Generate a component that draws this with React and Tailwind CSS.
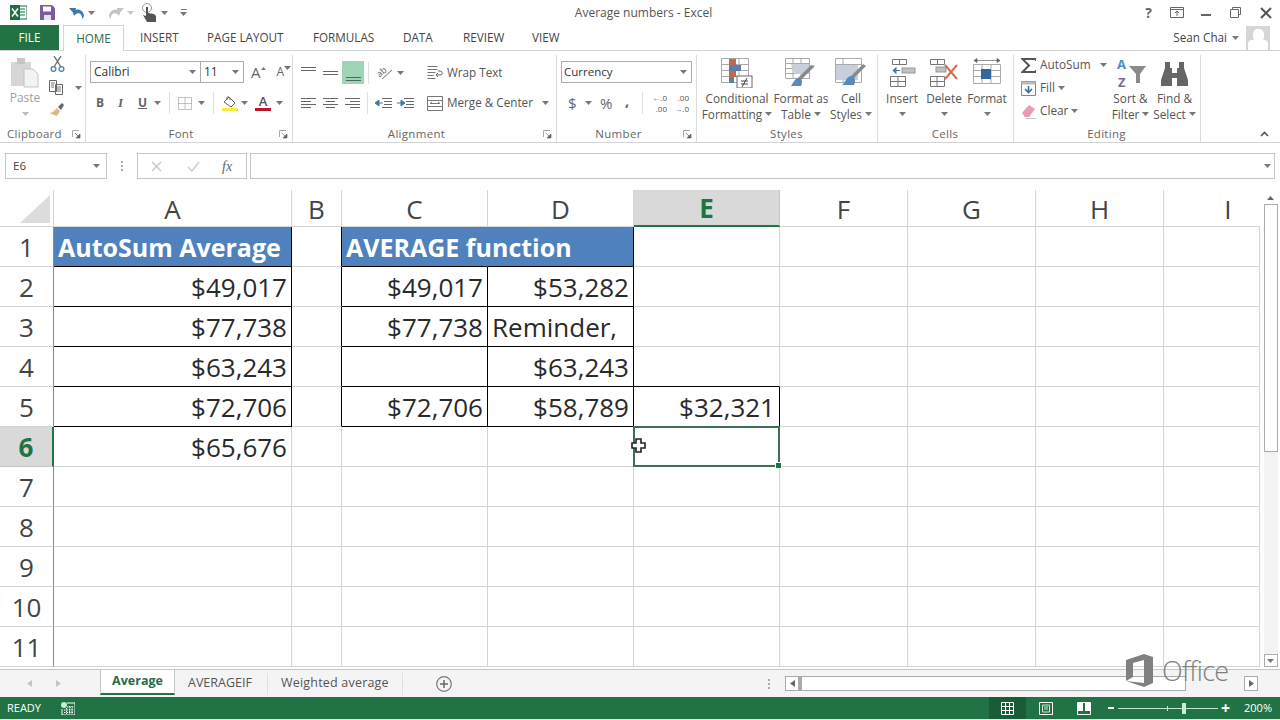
import React from 'react';

const ui = { fontFamily: '"Open Sans", "Noto Sans", sans-serif' };

const Caret = ({ className = '' }) => (
  <svg width="7" height="4" viewBox="0 0 7 4" className={className}><path d="M0 0h7L3.5 4z" fill="#777" /></svg>
);

const Launcher = () => (
  <svg width="9" height="9" viewBox="0 0 9 9"><path d="M.5 7V.5H7" fill="none" stroke="#aaa" /><path d="M3 3l4 4M8 4v4H4z" fill="#666" stroke="#666" strokeWidth=".7" /></svg>
);

const Lines = ({ rows, width = 15, height = 12, color = '#666' }) => (
  <svg width={width} height={height} viewBox={`0 0 ${width} ${height}`}>
    {rows.map((r, i) => <path key={i} d={`M${r[0]} ${r[2]}.5H${r[1]}`} stroke={color} />)}
  </svg>
);

const Group = ({ width, label, launcher, children }) => (
  <div className={`flex flex-col border-r border-[#dadada] ${width}`}>
    <div className="h-[71px] flex">{children}</div>
    <div className={`h-[16px] relative flex items-center justify-center text-[11.5px] text-[#666] tracking-[0.3px] ${launcher ? 'pr-[16px]' : 'pr-[1px]'}`}>
      {label}
      {launcher && <span className="absolute right-[4px] top-[4px] flex"><Launcher /></span>}
    </div>
  </div>
);

const Large = ({ width, icon, one, two, caret = true }) => (
  <div className={`flex flex-col items-center pt-[3px] ${width}`}>
    <div className="h-[30px] flex items-center justify-center">{icon}</div>
    <div className="mt-[2px] text-[11.8px] leading-[16px] text-[#555] text-center whitespace-nowrap">{one}</div>
    <div className="h-[16px] text-[11.8px] leading-[16px] text-[#555] flex items-center gap-[3px] whitespace-nowrap">
      {two}{caret && <Caret />}
    </div>
  </div>
);

const Sep = ({ className = '' }) => <div className={`w-px h-[22px] bg-[#e0e0e0] ${className}`} />;

const CellGridIcon = ({ children }) => (
  <svg width="32" height="30" viewBox="0 0 32 30">{children}</svg>
);

function TitleBar() {
  return (
    <div className="h-[25px] flex items-center text-[#555]">
      <div className="flex-1 flex items-center pl-[10px]">
        <svg width="17" height="17" viewBox="0 0 17 17">
          <rect x="7" y="2" width="10" height="13" fill="#fff" stroke="#1d6f42" />
          <path d="M10 5h5M10 8h5M10 11h5" stroke="#1d6f42" />
          <rect x="0" y="1" width="10" height="15" fill="#1d6f42" />
          <path d="M2 4.500l6 8M8 4.500l-6 8" stroke="#fff" strokeWidth="1.600" />
        </svg>
        <svg width="15" height="15" viewBox="0 0 15 15" className="ml-[13px]">
          <path d="M0 0h12l3 3v12H0z" fill="#7b5b9f" />
          <rect x="3" y="1.5" width="8" height="5" fill="#fff" />
          <rect x="4" y="10" width="7" height="5" fill="#e8e2ee" />
        </svg>
        <svg width="16" height="14" viewBox="0 0 16 14" className="ml-[14px]">
          <path d="M4 7C5 2 13 2 15 9c0 2-1 3-2 4 1-6-5-8-8-3z" fill="#3f78ad" /><path d="M0 2l7 0-1 7z" fill="#3f78ad" />
        </svg>
        <Caret className="ml-[3px]" />
        <svg width="16" height="14" viewBox="0 0 16 14" className="ml-[13px]">
          <path d="M12 7C11 2 3 2 1 9c0 2 1 3 2 4-1-6 5-8 8-3z" fill="#c4c4c4" /><path d="M16 2l-7 0 1 7z" fill="#c4c4c4" />
        </svg>
        <Caret className="ml-[3px] opacity-40" />
        <svg width="15" height="19" viewBox="0 0 15 19" className="ml-[8px]">
          <circle cx="5" cy="5" r="4.5" fill="none" stroke="#8a9aa8" />
          <path d="M4 4h2v6l6 1 2 2v6H5L1 12l3 1z" fill="#555" />
        </svg>
        <Caret className="ml-[4px]" />
        <span className="ml-[12px] flex flex-col items-center gap-[2px]">
          <span className="w-[6px] h-px bg-[#777]" /><Caret />
        </span>
      </div>
      <div className="text-[12px] -ml-[3px]">Average numbers - Excel</div>
      <div className="flex-1 flex items-center justify-end">
        <span className="font-bold text-[14px] text-[#666] mr-[18px]">?</span>
        <svg width="14" height="11" viewBox="0 0 14 11" className="mr-[17px]"><path d="M.5.5h13v10H.5zM.5 2.5h13" fill="none" stroke="#666" /><path d="M7 9V4M5 6l2-2 2 2" fill="none" stroke="#666" /></svg>
        <span className="w-[10px] h-[2px] bg-[#666] mt-[5px] mr-[19px]" />
        <svg width="11" height="11" viewBox="0 0 11 11" className="mr-[19px]"><path d="M2.5 2.5v-2h8v7h-2M.5 2.5h8v8h-8z" fill="none" stroke="#666" /></svg>
        <svg width="12" height="12" viewBox="0 0 12 12" className="mr-[8px]"><path d="M1 1l10 10M11 1L1 11" stroke="#555" strokeWidth="2" /></svg>
      </div>
    </div>
  );
}

function TabRow() {
  const tabs = [
    ['INSERT', 'w-[37px] ml-[16px]'],
    ['PAGE LAYOUT', 'w-[77px] ml-[30px]'],
    ['FORMULAS', 'w-[61px] ml-[29px]'],
    ['DATA', 'w-[31px] ml-[29px]'],
    ['REVIEW', 'w-[40px] ml-[29px]'],
    ['VIEW', 'w-[27px] ml-[29px]'],
  ];
  return (
    <div className="h-[25px] flex items-center text-[11.7px] text-[#444] relative z-10">
      <div className="w-[59px] h-full bg-[#217346] text-white flex items-center justify-center">FILE</div>
      <div className="w-[61px] h-[26px] ml-[4px] bg-white border border-b-0 border-[#d4d4d4] flex items-center justify-center text-[#2b6a4a] self-start">HOME</div>
      {tabs.map(([name, cls]) => (
        <div key={name} className={`whitespace-nowrap ${cls}`}>{name}</div>
      ))}
      <div className="ml-auto flex items-center h-full pr-[10px]">
        <span className="mr-[5px]">Sean Chai</span>
        <Caret className="mr-[7px]" />
        <div className="w-[24px] h-[24px] bg-[#d6d6d6] overflow-hidden flex flex-col items-center">
          <span className="w-[11px] h-[13px] mt-[3px] rounded-[5px] bg-white" />
          <span className="w-[20px] h-[10px] mt-[-2px] rounded-t-[4px] bg-white" />
        </div>
      </div>
    </div>
  );
}

function Ribbon() {
  return (
    <div className="h-[93px] border-y border-[#d4d4d4] pt-[4px] flex">
      <Group width="w-[86px]" label="Clipboard" launcher>
        <div className="w-[48px] flex flex-col items-center pt-[3px] pl-[2px]">
          <svg width="28" height="30" viewBox="0 0 28 30">
            <rect x="0" y="4" width="20" height="24" fill="#d6d6d6" />
            <rect x="6" y="0" width="8" height="6" fill="#c6c6c6" />
            <path d="M13 11h9l5 5v13H13z" fill="#f3f3f3" stroke="#c4c4c4" />
          </svg>
          <div className="mt-[2px] text-[12px] leading-[16px] text-[#a0a0a0]">Paste</div>
          <Caret className="mt-[6px] opacity-50" />
        </div>
        <div className="flex flex-col items-start">
          <svg width="15" height="16" viewBox="0 0 15 16" className="mt-[1px] ml-[2px]">
            <path d="M4 0l7 11M11 0L4 11" stroke="#666" strokeWidth="1.3" />
            <circle cx="3.5" cy="13" r="2.4" fill="none" stroke="#4d7fae" strokeWidth="1.3" /><circle cx="11.5" cy="13" r="2.4" fill="none" stroke="#4d7fae" strokeWidth="1.3" />
          </svg>
          <div className="flex items-center mt-[8px] ml-[1px]">
            <svg width="16" height="15" viewBox="0 0 16 15">
              <path d="M.5.5h7v11h-7zM6.5 4.5h7v10h-7z" fill="#fff" stroke="#666" /><path d="M2 3h4M2 5h3M2 7h3M8 7h4M8 9h4M8 11h4" stroke="#777" />
            </svg>
            <Caret className="ml-[10px]" />
          </div>
          <svg width="17" height="16" viewBox="0 0 17 16" className="mt-[7px]">
            <path d="M9 6l3 3-3 5-8-3c3 0 5-2 8-5z" fill="#d8b98a" /><path d="M10 5l4-4 2 2-3 5z" fill="#666" />
          </svg>
        </div>
      </Group>

      <Group width="w-[207px]" label="Font" launcher>
        <div className="flex flex-col pt-[6px] pl-[4px]">
          <div className="flex items-center h-[22px]">
            <div className="w-[111px] h-full border border-[#ababab] flex items-center justify-between pl-[3px] pr-[4px] text-[12px] text-[#333]">Calibri<Caret /></div>
            <div className="w-[43px] h-full border border-l-0 border-[#ababab] flex items-center justify-between pl-[3px] pr-[4px] text-[12px] text-[#333]">11<Caret /></div>
            <span className="ml-[7px] text-[15px] text-[#666] leading-none">A</span>
            <svg width="5" height="3" viewBox="0 0 5 3" className="mb-[8px]"><path d="M0 3h5L2.5 0z" fill="#777" /></svg>
            <span className="ml-[11px] text-[12px] text-[#666] leading-none">A</span>
            <Caret className="mb-[8px]" />
          </div>
          <div className="flex items-center h-[22px] mt-[9px] text-[13px] text-[#666]">
            <span className="ml-[6px] w-[10px] font-bold text-[12px]">B</span>
            <span className="ml-[12px] w-[10px] italic font-bold text-[13px]" style={{ fontFamily: '"Liberation Serif", serif' }}>I</span>
            <span className="ml-[10px] w-[11px] underline font-bold text-[12px]">U</span>
            <Caret className="ml-[5px]" />
            <Sep className="ml-[8px]" />
            <svg width="14" height="13" viewBox="0 0 14 13" className="ml-[8px]"><path d="M.5.5h13v12H.5zM7 .5v12M.5 6.5h13" fill="none" stroke="#888" strokeDasharray="1 1" /></svg>
            <Caret className="ml-[6px]" />
            <Sep className="ml-[8px]" />
            <svg width="16" height="16" viewBox="0 0 16 16" className="ml-[8px]"><path d="M2 7l5-5 6 6-4 4z" fill="#fff" stroke="#666" /><path d="M5 5c-1-4 3-5 3 0" fill="none" stroke="#666" /><rect y="13" width="16" height="3" fill="#f4ee3a" /></svg>
            <Caret className="ml-[3px]" />
            <span className="ml-[7px] flex flex-col items-center w-[16px]">
              <span className="text-[13px] font-semibold leading-[13px] text-[#555]">A</span>
              <span className="w-[16px] h-[3px] bg-[#c0142a]" />
            </span>
            <Caret className="ml-[5px]" />
          </div>
        </div>
      </Group>

      <Group width="w-[264px]" label="Alignment" launcher>
        <div className="w-[128px] flex flex-col pt-[6px]">
          <div className="flex items-center h-[23px]">
            <span className="ml-[8px] flex mb-[2px]"><Lines rows={[[0, 15, 1], [0, 15, 4]]} /></span>
            <span className="ml-[7px] flex"><Lines rows={[[0, 15, 4], [0, 15, 7]]} /></span>
            <div className="ml-[4px] w-[22px] h-[23px] bg-[#9fd5b7] flex items-end justify-center pb-[1px]"><Lines rows={[[0, 15, 6], [0, 15, 9]]} color="#4d6b5c" /></div>
            <Sep className="ml-[4px]" />
            <svg width="17" height="15" viewBox="0 0 17 15" className="ml-[7px] overflow-visible"><text x="1" y="10" fontSize="9" fill="#666" transform="rotate(-40 6 8)" fontFamily="Open Sans">ab</text><path d="M6 14L16 5" stroke="#666" /></svg>
            <Caret className="ml-[4px]" />
          </div>
          <div className="flex items-center h-[22px] mt-[8px]">
            <span className="ml-[8px] flex"><Lines rows={[[0, 15, 1], [0, 10, 4], [0, 15, 7], [0, 10, 10]]} /></span>
            <span className="ml-[7px] flex"><Lines rows={[[0, 15, 1], [3, 12, 4], [0, 15, 7], [3, 12, 10]]} /></span>
            <span className="ml-[7px] flex"><Lines rows={[[0, 15, 1], [5, 15, 4], [0, 15, 7], [5, 15, 10]]} /></span>
            <Sep className="ml-[7px]" />
            <svg width="17" height="12" viewBox="0 0 17 12" className="ml-[7px]"><path d="M7 1.5h10M9 4.5h8M9 7.5h8M7 10.500h10" stroke="#666" /><path d="M0 6l4-3v6zM3 6h5" fill="#3f78ad" stroke="#3f78ad" /></svg>
            <svg width="17" height="12" viewBox="0 0 17 12" className="ml-[5px]"><path d="M7 1.5h10M9 4.5h8M9 7.5h8M7 10.500h10" stroke="#666" /><path d="M8 6L4 3v6zM0 6h5" fill="#3f78ad" stroke="#3f78ad" /></svg>
          </div>
        </div>
        <div className="flex flex-col pt-[6px] text-[11.7px] text-[#555]">
          <div className="flex items-center h-[23px] ml-[6px]">
            <svg width="16" height="14" viewBox="0 0 16 14"><path d="M.5.5h10M.5 3.500h10M.5 6.500h8M.5 9.500h6M.5 12.500h8" stroke="#777" /><path d="M9 9h4c3 0 3-4 0-4h-2M9 9l2-2M9 9l2 2" fill="none" stroke="#666" /></svg>
            <span className="ml-[4px]">Wrap Text</span>
          </div>
          <div className="flex items-center h-[22px] mt-[8px] ml-[6px]">
            <svg width="16" height="15" viewBox="0 0 16 15"><path d="M.5.5h15v14H.5zM.5 4.500h15M.5 10.500h15" fill="none" stroke="#777" /><path d="M3 7.500h10M3 7.500l2-1.500M13 7.500l-2-1.500" fill="none" stroke="#777" /></svg>
            <span className="ml-[4px]">Merge &amp; Center</span>
            <Caret className="ml-[9px]" />
          </div>
        </div>
      </Group>

      <Group width="w-[140px]" label="Number" launcher>
        <div className="flex flex-col pt-[6px] pl-[4px]">
          <div className="w-[131px] h-[22px] border border-[#ababab] flex items-center justify-between pl-[2px] pr-[4px] text-[11.5px] text-[#333]">Currency<Caret /></div>
          <div className="flex items-center h-[22px] mt-[9px] text-[#666]">
            <span className="ml-[7px] text-[15px] w-[10px]">$</span>
            <Caret className="ml-[7px]" />
            <span className="ml-[8px] text-[15px] w-[14px]">%</span>
            <span className="ml-[11px] text-[15px] font-bold w-[8px] -mt-[5px]">,</span>
            <Sep className="ml-[9px]" />
            <span className="ml-[6px] text-[8px] leading-[11px] w-[18px] text-right text-[#555] whitespace-nowrap">←.0<br />.00</span>
            <span className="ml-[7px] text-[8px] leading-[11px] w-[15px] text-right text-[#555] whitespace-nowrap">.00<br />→.0</span>
          </div>
        </div>
      </Group>

      <Group width="w-[181px]" label="Styles">
        <Large width="w-[80px]" one="Conditional" two="Formatting" icon={
          <CellGridIcon>
            <path d="M.5.5h27v24H.5zM.5 6.500h27M.5 12.500h27M.5 18.500h27M9 .5v24M18 .5v24" fill="none" stroke="#aaa" />
            <rect x="8" y="1" width="7" height="6" fill="#c6674f" /><rect x="8" y="7" width="12" height="6" fill="#5c7fa8" /><rect x="8" y="13" width="7" height="6" fill="#c6674f" /><rect x="8" y="19" width="5" height="6" fill="#5c7fa8" />
            <rect x="16" y="18" width="15" height="12" fill="#fff" stroke="#666" />
            <path d="M20 23h7M20 26h7M26 20l-5 9" stroke="#444" fill="none" />
          </CellGridIcon>
        } />
        <Large width="w-[48px]" one="Format as" two="Table" icon={
          <CellGridIcon>
            <path d="M.5.5h24v20H.5zM.5 5.500h24M.5 10.500h24M.5 15.500h24M8 .5v20M16 .5v20" fill="none" stroke="#aaa" />
            <path d="M6 6h18v10H10z" fill="#c8cedb" />
            <path d="M30 8l-14 14-3-2L26 7z" fill="#8a8a8a" /><path d="M13 20c4 0 5 4 3 8H6c2-2 3-7 7-8z" fill="#5a89bb" />
          </CellGridIcon>
        } />
        <Large width="w-[52px]" one="Cell" two="Styles" icon={
          <CellGridIcon>
            <path d="M.5.5h26v24H.5zM.5 6.500h26M8 .5v24" fill="none" stroke="#aaa" />
            <rect x="1" y="7" width="22" height="15" fill="#c8cedb" />
            <path d="M31 8L19 20l-3-2L28 6z" fill="#8a8a8a" /><path d="M16 18c4 0 5 4 3 9H7c3-2 4-8 9-9z" fill="#5a89bb" />
          </CellGridIcon>
        } />
      </Group>

      <Group width="w-[136px]" label="Cells">
        <Large width="w-[48px]" one="Insert" two="" icon={
          <svg width="27" height="28" viewBox="0 0 27 28">
            <path d="M3.5.5h14v5h-14zM10.500.5v5M1.500 17.500h15v10h-15zM1.500 22.500h15M9 17.500v10" fill="none" stroke="#777" />
            <rect x="13" y="9" width="13" height="5" fill="#c0c0c0" stroke="#999" />
            <path d="M4 11.500h7M4 11.500l3-3v6z" fill="#3f78ad" stroke="#3f78ad" />
          </svg>
        } />
        <Large width="w-[36px]" one="Delete" two="" icon={
          <svg width="30" height="28" viewBox="0 0 30 28">
            <path d="M1.500.5h14v5h-14zM8.500.5v5M1.500 17.500h14v10h-14zM1.500 22.500h14M8 17.500v10" fill="none" stroke="#777" />
            <rect x="7" y="8" width="10" height="5" fill="#c0c0c0" stroke="#999" />
            <path d="M16 6l12 14M28 6L16 20" stroke="#d9694f" strokeWidth="2" />
          </svg>
        } />
        <Large width="w-[50px]" one="Format" two="" icon={
          <svg width="29" height="30" viewBox="0 0 29 30">
            <path d="M1 2.500h26M1 2.500l3-2v4zM27 2.500l-3-2v4z" fill="#666" stroke="#666" strokeWidth=".7" />
            <path d="M.5 6.500h27v19H.5zM.5 12.500h27M.5 18.500h27M9 6.500v19M18 6.500v19" fill="none" stroke="#aaa" />
            <rect x="8" y="11" width="10" height="10" fill="#33679e" />
          </svg>
        } />
      </Group>

      <Group width="w-[187px]" label="Editing">
        <div className="w-[96px] flex flex-col pl-[7px] pt-[1px] text-[11.8px] text-[#555]">
          <div className="flex items-center h-[18px]">
            <svg width="15" height="15" viewBox="0 0 15 15" className="mr-[4px]"><path d="M15 3V1H1.500L8 7.500 1.500 14H15v-2" fill="none" stroke="#555" strokeWidth="2" /></svg>
            <span>AutoSum</span>
            <Caret className="ml-[9px]" />
          </div>
          <div className="flex items-center h-[18px] mt-[5px]">
            <svg width="15" height="15" viewBox="0 0 15 15" className="mr-[4px]"><path d="M.5.5h14v14H.5z" fill="#fff" stroke="#888" /><path d="M.5.5h14v3H.5z" fill="#bbb" /><path d="M7.500 5v6M4 8l3.500 3.500L11 8" fill="none" stroke="#2f6ea5" strokeWidth="1.6" /></svg>
            <span>Fill</span>
            <Caret className="ml-[3px]" />
          </div>
          <div className="flex items-center h-[18px] mt-[5px]">
            <svg width="15" height="15" viewBox="0 0 15 15" className="mr-[4px]"><path d="M1 9l7-8 6 4-6 8H4z" fill="#e89cb0" /><path d="M5 15h10" stroke="#888" /></svg>
            <span>Clear</span>
            <Caret className="ml-[3px]" />
          </div>
        </div>
        <Large width="w-[41px]" one="Sort &" two="Filter" icon={
          <svg width="30" height="30" viewBox="0 0 30 30" className="overflow-visible">
            <text x="1" y="11" fontSize="13" fontWeight="700" fill="#4d8cc7" fontFamily="Open Sans">A</text>
            <text x="2" y="29" fontSize="13" fontWeight="700" fill="#7a6aa0" fontFamily="Open Sans">Z</text>
            <path d="M13 8h17l-6 8v9h-4v-9z" fill="#8a8a8a" />
          </svg>
        } />
        <Large width="w-[47px]" one="Find &" two="Select" icon={
          <svg width="27" height="25" viewBox="0 0 27 25">
            <path d="M4 1h5v6h2v5h5V7h2V1h5v6l4 12v6H16v-8h-5v8H0v-6L4 7z" fill="#666" />
          </svg>
        } />
      </Group>

      <div className="flex-1 flex items-end justify-end pr-[11px] pb-[5px]">
        <svg width="9" height="6" viewBox="0 0 9 6"><path d="M1 5l3.500-3.500L8 5" fill="none" stroke="#555" strokeWidth="1.600" /></svg>
      </div>
    </div>
  );
}

function FormulaBar() {
  return (
    <div className="h-[47px] pt-[10px] pl-[5px] pr-[5px] flex">
      <div className="w-[102px] h-[26px] border border-[#c6c6c6] flex items-center justify-between pl-[7px] pr-[6px] text-[11.5px] text-[#444]">E6<Caret /></div>
      <div className="w-[30px] h-[26px] flex flex-col items-center justify-center gap-[2px]">
        <span className="w-[2px] h-[2px] bg-[#aaa]" /><span className="w-[2px] h-[2px] bg-[#aaa]" /><span className="w-[2px] h-[2px] bg-[#aaa]" />
      </div>
      <div className="w-[110px] h-[26px] border border-[#c6c6c6] flex items-center">
        <svg width="11" height="11" viewBox="0 0 11 11" className="ml-[13px]"><path d="M1 1l9 9M10 1l-9 9" stroke="#ccc" strokeWidth="1.500" /></svg>
        <svg width="13" height="11" viewBox="0 0 13 11" className="ml-[25px]"><path d="M1 6l4 4 7-9" fill="none" stroke="#ccc" strokeWidth="1.500" /></svg>
        <span className="ml-[22px] text-[14px] italic text-[#666]" style={{ fontFamily: '"Liberation Serif", serif' }}>fx</span>
      </div>
      <div className="flex-1 ml-[3px] h-[26px] border border-[#c6c6c6] flex items-center justify-end pr-[3px]"><Caret /></div>
    </div>
  );
}

const cols = ['A', 'B', 'C', 'D', 'E', 'F', 'G', 'H', 'I'];
const BK = 'border-r-black border-b-black';

const rowsData = [
  [
    { t: 'AutoSum Average', c: 'bg-[#4f81bd] text-white text-[25px] font-bold border-r-black border-b-black', left: true },
    { t: '', c: 'border-r-black' },
    { t: 'AVERAGE function', c: 'relative z-10 bg-[#4f81bd] text-white text-[25px] font-bold border-b-black border-r-[#4f81bd]', left: true },
    { t: '', c: 'bg-[#4f81bd] border-b-black border-r-black' },
    {},
  ],
  [
    { t: '$49,017', c: BK },
    { t: '', c: 'border-r-black' },
    { t: '$49,017', c: BK },
    { t: '$53,282', c: BK },
    {},
  ],
  [
    { t: '$77,738', c: BK },
    { t: '', c: 'border-r-black' },
    { t: '$77,738', c: BK },
    { t: 'Reminder,', c: BK, left: true },
    {},
  ],
  [
    { t: '$63,243', c: BK },
    { t: '', c: 'border-r-black' },
    { t: '', c: BK },
    { t: '$63,243', c: BK },
    { t: '', c: 'border-b-black' },
  ],
  [
    { t: '$72,706', c: BK },
    { t: '', c: 'border-r-black' },
    { t: '$72,706', c: BK },
    { t: '$58,789', c: BK },
    { t: '$32,321', c: BK },
  ],
  [{ t: '$65,676' }, {}, {}, {}, {}],
  [], [], [], [], [],
];

function Sheet() {
  return (
    <div className="relative grid grid-cols-[54px_238px_50px_146px_146px_146px_128px_128px_128px_96px] grid-rows-[37px_repeat(11,40px)] w-[1260px] text-[26px] text-[#2a2a2a]">
      <div className="border-r border-b border-[#d4d4d4] flex items-end justify-end pr-[3px] pb-[3px]">
        <svg width="30" height="28" viewBox="0 0 30 28"><path d="M30 0v28H0z" fill="#dcdcdc" /></svg>
      </div>
      {cols.map(c => (
        <div key={c} className={c === 'E'
          ? 'bg-[#d9d9d9] border-r border-b-2 border-r-[#c6c6c6] border-b-[#217346] flex items-center justify-center pt-[2px] font-bold text-[#217346]'
          : c === 'I'
            ? 'border-b border-[#d4d4d4] flex items-center justify-center pt-[2px] pl-[32px] text-[#444]'
            : 'border-r border-b border-[#d4d4d4] flex items-center justify-center pt-[2px] text-[#444]'}>{c}</div>
      ))}
      {rowsData.map((row, r) => (
        <React.Fragment key={r}>
          <div className={r === 5
            ? 'bg-[#d9d9d9] border-r-2 border-b border-r-[#217346] border-b-[#c6c6c6] flex items-center justify-center pt-[2px] font-bold text-[#217346]'
            : 'border-r border-b border-r-[#8a8a8a] border-b-[#d4d4d4] flex items-center justify-center pt-[2px] text-[#444]'}>{r + 1}</div>
          {cols.map((c, i) => {
            const cell = row[i] || {};
            return (
              <div key={c} className={`border-r border-b border-[#d4d4d4] flex items-center px-[4px] pt-[2px] whitespace-nowrap ${cell.left ? 'justify-start' : 'justify-end'} ${cell.c || ''}`}>
                {cell.t}
              </div>
            );
          })}
        </React.Fragment>
      ))}
      {/* selected cell E6 */}
      <div className="absolute z-20 left-[633px] top-[236px] w-[147px] h-[41px] border-2 border-[#3e6e58] pointer-events-none">
        <span className="absolute right-[-4px] bottom-[-4px] w-[5px] h-[5px] bg-[#217346] border border-white box-content" />
      </div>
      <svg width="15" height="15" viewBox="0 0 15 15" className="absolute z-20 left-[631px] top-[248px]">
        <path d="M5 1h5v4h4v5h-4v4H5v-4H1V5h4z" fill="#fff" stroke="#222" strokeWidth="1.600" />
      </svg>
    </div>
  );
}

function VScroll() {
  return (
    <div className="w-[20px] flex flex-col items-center pl-[1px] pt-[1px]">
      <div className="w-[14px] h-[13px] flex items-center justify-center"><svg width="7" height="4" viewBox="0 0 7 4"><path d="M0 4h7L3.500 0z" fill="#666" /></svg></div>
      <div className="w-[14px] h-[248px] border border-[#ababab] bg-white" />
      <div className="w-[14px] flex-1 bg-[#f3f3f3]" />
      <div className="w-[14px] h-[13px] border border-[#ababab] flex items-center justify-center"><Caret /></div>
    </div>
  );
}

function SheetTabs() {
  return (
    <div className="h-[30px] pt-[2px] bg-white">
      <div className="h-[28px] border-t border-[#c6c6c6] bg-[#f4f4f4] flex items-center text-[12.5px] text-[#555]">
        <div className="w-[100px] flex items-center pl-[27px]">
          <svg width="5" height="7" viewBox="0 0 5 7"><path d="M5 0v7L0 3.500z" fill="#c4c4c4" /></svg>
          <svg width="5" height="7" viewBox="0 0 5 7" className="ml-[24px]"><path d="M0 0v7l5-3.500z" fill="#c4c4c4" /></svg>
        </div>
        <div className="w-[75px] h-[25px] -mt-[3px] bg-white border-x border-b-2 border-x-[#c6c6c6] border-b-[#217346] flex items-center justify-center font-bold text-[#2b6a4a]">Average</div>
        <span className="ml-[13px] w-[66px] whitespace-nowrap">AVERAGEIF</span>
        <Sep className="ml-[13px]" />
        <span className="ml-[13px] w-[107px] whitespace-nowrap tracking-[0.2px]">Weighted average</span>
        <Sep className="ml-[14px]" />
        <svg width="16" height="16" viewBox="0 0 16 16" className="ml-[33px]"><circle cx="8" cy="8" r="7.300" fill="none" stroke="#777" strokeWidth="1.200" /><path d="M4 8h8M8 4v8" stroke="#666" strokeWidth="1.500" /></svg>
        <div className="ml-[316px] flex flex-col gap-[2px]">
          <span className="w-[2px] h-[2px] bg-[#aaa]" /><span className="w-[2px] h-[2px] bg-[#aaa]" /><span className="w-[2px] h-[2px] bg-[#aaa]" />
        </div>
        <div className="ml-[15px] w-[14px] h-[15px] border border-[#ababab] bg-white flex items-center justify-center">
          <svg width="5" height="7" viewBox="0 0 5 7"><path d="M5 0v7L0 3.500z" fill="#666" /></svg>
        </div>
        <div className="w-[387px] h-[15px] border border-l-[3px] border-[#ababab] bg-white" />
        <div className="ml-[58px] w-[14px] h-[15px] border border-[#ababab] bg-white flex items-center justify-center">
          <svg width="5" height="7" viewBox="0 0 5 7"><path d="M0 0v7l5-3.500z" fill="#666" /></svg>
        </div>
      </div>
    </div>
  );
}

function StatusBar() {
  return (
    <div className="h-[22px] bg-[#217346] flex items-center text-[11px] text-white">
      <span className="ml-[7px]">READY</span>
      <svg width="14" height="13" viewBox="0 0 14 13" className="ml-[20px]">
        <circle cx="3" cy="3" r="3" fill="#c6efce" /><path d="M6 1h8v12H1V7" fill="none" stroke="#fff" /><path d="M3 8h9M3 10.500h9M6 5h6M5.500 6v6M8.500 4v8M11 4v8" stroke="#fff" strokeDasharray="1.500 1" />
      </svg>
      <div className="ml-auto flex items-center h-full">
        <div className="w-[37px] h-full bg-[#1a5c38] flex items-center justify-center">
          <svg width="13" height="13" viewBox="0 0 13 13"><path d="M.5.5h12v12H.5zM.5 4.500h12M.5 8.500h12M4.500.5v12M8.500.5v12" fill="none" stroke="#fff" /></svg>
        </div>
        <svg width="14" height="13" viewBox="0 0 14 13" className="ml-[13px]"><path d="M.5.5h13v12H.5z" fill="none" stroke="#fff" /><path d="M3.500 3h7v7h-7zM5 5h4M5 7h4" fill="none" stroke="#fff" strokeWidth=".8" /></svg>
        <svg width="14" height="13" viewBox="0 0 14 13" className="ml-[24px]"><path d="M.5.5h13v12H.5z" fill="none" stroke="#fff" /><path d="M1 1h5v8H1zM8 1h5v8H8z" fill="#fff" /></svg>
        <span className="ml-[17px] w-[6px] h-[2px] bg-white" />
        <div className="ml-[4px] w-[100px] h-[12px] flex items-center">
          <span className="w-[49px] h-px bg-[#bfe6cf]" />
          <span className="w-px h-[5px] bg-[#bfe6cf]" />
          <span className="w-[14px] h-px bg-[#bfe6cf]" />
          <span className="w-[4px] h-[11px] bg-[#c6efce]" />
          <span className="flex-1 h-px bg-[#bfe6cf]" />
        </div>
        <span className="ml-[3px] font-bold text-[16px] leading-none">+</span>
        <span className="ml-[14px] mr-[8px] text-[11px]">200%</span>
      </div>
    </div>
  );
}

export default function App() {
  return (
    <div className="w-[1280px] h-[720px] overflow-hidden bg-white relative flex flex-col" style={ui}>
      <TitleBar />
      <TabRow />
      <Ribbon />
      <FormulaBar />
      <div className="h-[477px] flex">
        <Sheet />
        <VScroll />
      </div>
      <SheetTabs />
      <StatusBar />
      <div className="h-px bg-[#e6e6e6]" />

      {/* Office watermark */}
      <div className="absolute z-30 left-[1126px] top-[654px] flex items-center text-[#7f7f7f]">
        <svg width="29" height="33" viewBox="0 0 29 33">
          <path d="M0 6L18 0l9 3v26l-9 4L0 27l18 2V6L7 9v14l-7 4z" fill="#808080" />
        </svg>
        <span className="ml-[7px] text-[27px] font-light leading-none tracking-[-0.7px]">Office</span>
      </div>
    </div>
  );
}
